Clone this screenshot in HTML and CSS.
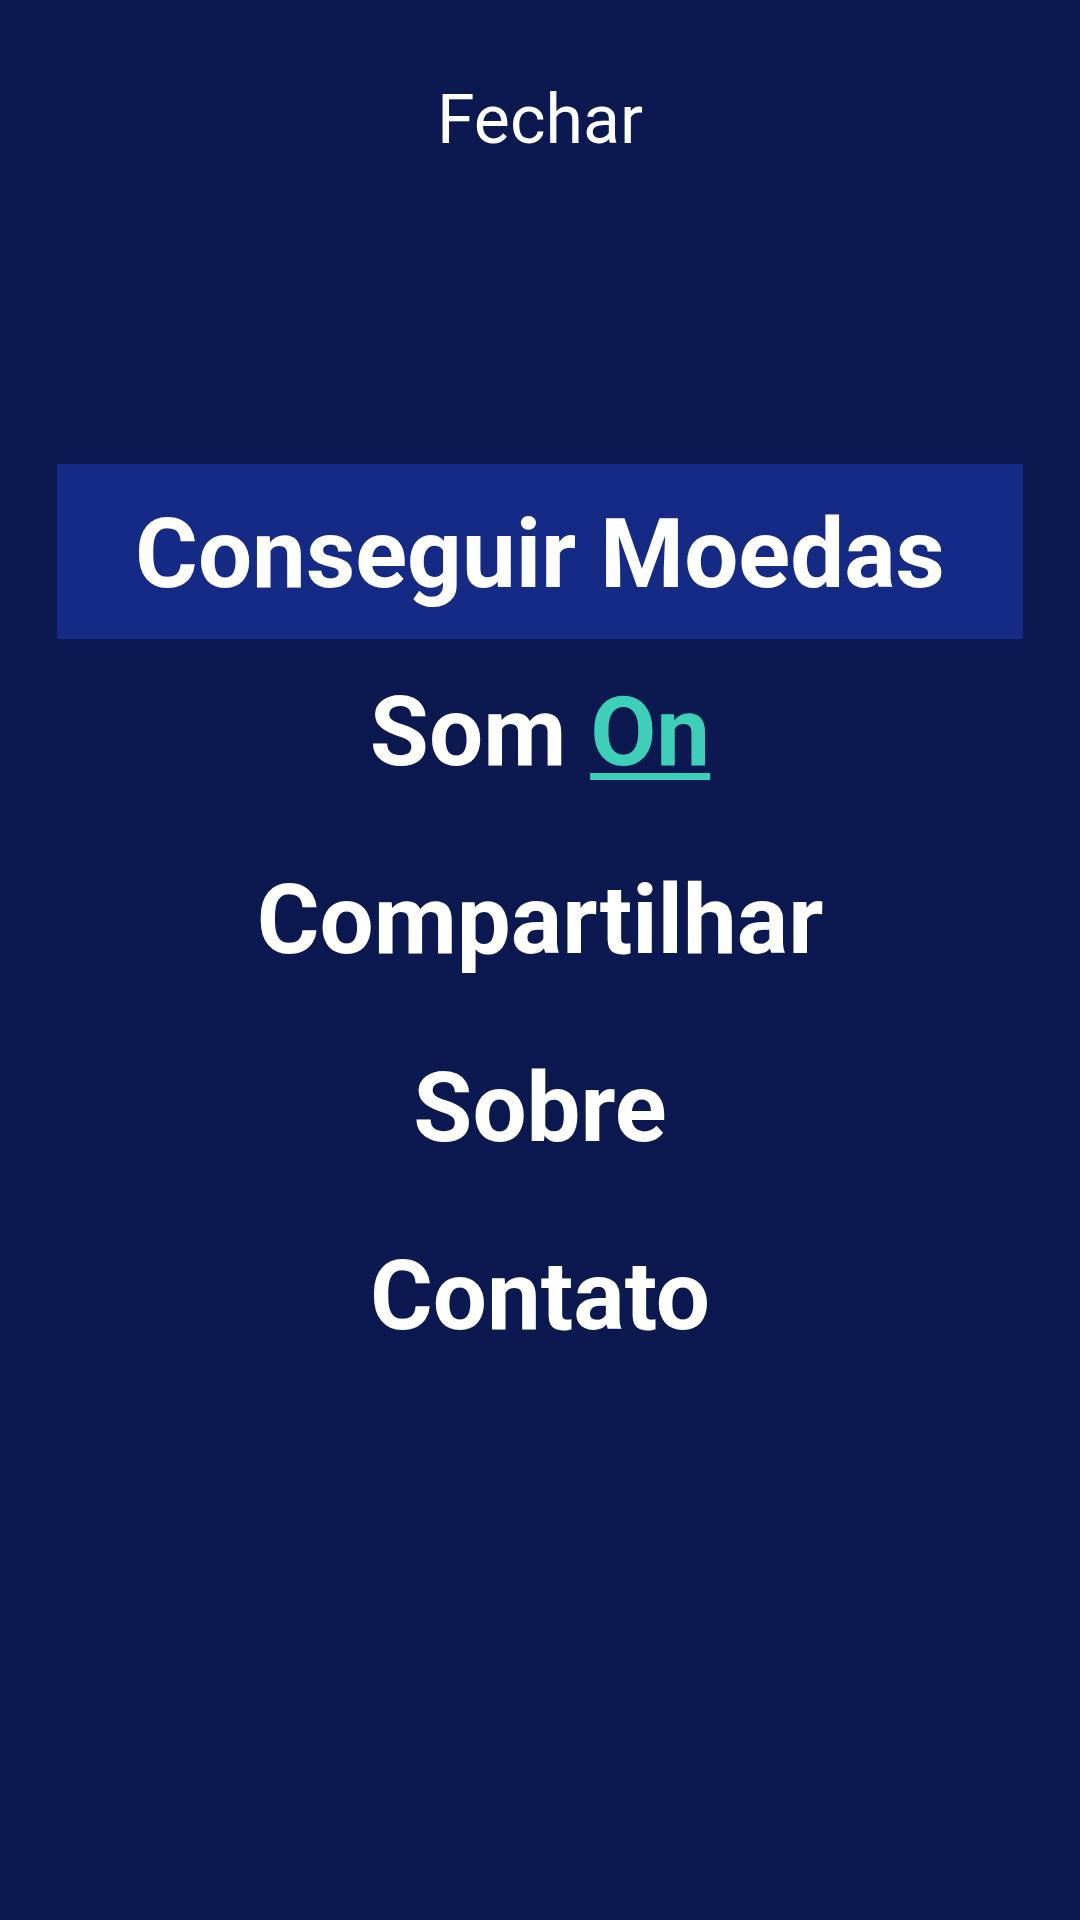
FILE: index.html
```html
<!DOCTYPE html>
<html>
<head>
  <title>Menu</title>
  <link rel="stylesheet" href="styles.css">
</head>
<body>
  <div class="menu">
    <div class="close">Fechar</div>

    <ul class="menu-list">
      <li class="menu-item highlight">Conseguir Moedas</li>
      <li class="menu-item">Som <span class="toggle">On</span></li>
      <li class="menu-item">Compartilhar</li>
      <li class="menu-item">Sobre</li>
      <li class="menu-item">Contato</li>
    </ul>
  </div>
</body>
</html>
```

FILE: styles.css
```css
html, body {
  margin: 0;
  padding: 0;
}
body {
  width: 1080px;
  height: 1920px;
  background-color: #0c1850;
  font-family: Roboto, "Liberation Sans", sans-serif;
  color: #fff;
}
.menu {
  display: flex;
  flex-direction: column;
  align-items: center;
  padding-top: 86px;
}
.close {
  font-size: 68px;
  line-height: 1;
  font-weight: normal;
}
.menu-list {
  list-style: none;
  margin: 310px 0 0 0;
  padding: 0;
  width: 966px;
  display: flex;
  flex-direction: column;
  gap: 92px;
}
.menu-item {
  font-size: 96px;
  font-weight: bold;
  line-height: 1;
  text-align: center;
}
.menu-item.highlight {
  background-color: #142a84;
  padding: 42px 0 37px 0;
  margin-bottom: -47px;
}
.toggle {
  color: #3ecfb9;
  text-decoration: underline;
  text-decoration-thickness: 7px;
  text-underline-offset: 8px;
}
```
